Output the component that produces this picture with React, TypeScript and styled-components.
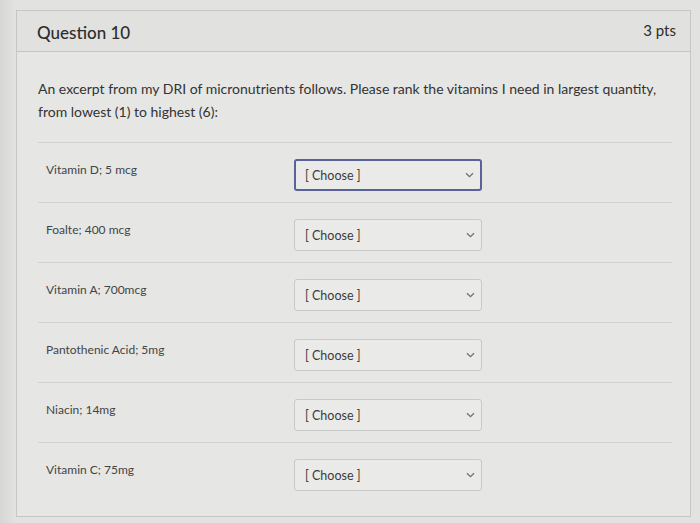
import React from "react";
import styled, { createGlobalStyle } from "styled-components";

const Global = createGlobalStyle`
  html, body { margin: 0; padding: 0; background: #dcdcda; }
  body { font-family: Lato, "Open Sans", "Liberation Sans", sans-serif; color: #3a3a3a; }
`;

const Page = styled.div`
  width: 700px;
  height: 523px;
  box-sizing: border-box;
  padding: 10px 9px 6px 16px;
  background: linear-gradient(90deg, #d6d6d4 0px, #e2e2e0 16px);
`;

const Card = styled.div`
  height: 100%;
  box-sizing: border-box;
  border: 1px solid #c6c6c4;
  background: #e6e6e4;
  display: flex;
  flex-direction: column;
`;

const Header = styled.div`
  height: 40px;
  flex: none;
  display: flex;
  align-items: center;
  justify-content: space-between;
  padding: 0 14px 0 20px;
  background: #e1e1df;
  border-bottom: 1px solid #c4c4c2;
`;

const Title = styled.div`
  font-size: 17px;
  font-weight: 500;
  color: #2d2d2d;
  margin-top: 3px;
`;

const Points = styled.div`
  font-size: 15px;
  color: #2d2d2d;
  margin-top: -2px;
`;

const Body = styled.div`
  padding: 25px 18px 0 21px;
`;

const Prompt = styled.p`
  margin: 0;
  font-size: 14px;
  line-height: 23px;
  color: #333;
`;

const List = styled.div`
  margin-top: 19px;
  border-top: 1px solid #d2d2d0;
`;

const Row = styled.div<{ $last?: boolean }>`
  height: ${(p) => (p.$last ? 70 : 60)}px;
  box-sizing: border-box;
  display: grid;
  grid-template-columns: 256px 188px;
  border-bottom: ${(p) => (p.$last ? "none" : "1px solid #d2d2d0")};
`;

const Label = styled.div`
  padding: 19px 0 0 8px;
  font-size: 12px;
  line-height: 16px;
  color: #444;
`;

const Select = styled.div<{ $focused?: boolean }>`
  margin-top: 16px;
  height: 32px;
  box-sizing: border-box;
  display: flex;
  align-items: center;
  justify-content: space-between;
  padding: 0 6px 0 ${(p) => (p.$focused ? 9 : 10)}px;
  background: #eaeae8;
  border: ${(p) => (p.$focused ? "2px solid #5a6299" : "1px solid #c9c9c7")};
  border-radius: 3px;
  font-size: 12.5px;
  color: #3c3c3c;
`;

const Chevron = () => (
  <svg width="9" height="6" viewBox="0 0 9 6">
    <path d="M1 1.3 L4.5 4.7 L8 1.3" fill="none" stroke="#6e6e80" strokeWidth="1.3" />
  </svg>
);

const rows = [
  "Vitamin D; 5 mcg",
  "Foalte; 400 mcg",
  "Vitamin A; 700mcg",
  "Pantothenic Acid; 5mg",
  "Niacin; 14mg",
  "Vitamin C; 75mg",
];

export default function App() {
  return (
    <>
      <Global />
      <Page>
        <Card>
          <Header>
            <Title>Question 10</Title>
            <Points>3 pts</Points>
          </Header>
          <Body>
            <Prompt>
              An excerpt from my DRI of micronutrients follows. Please rank the vitamins I need in largest quantity,
              <br />
              from lowest (1) to highest (6):
            </Prompt>
            <List>
              {rows.map((r, i) => (
                <Row key={r} $last={i === rows.length - 1}>
                  <Label>{r}</Label>
                  <Select $focused={i === 0}>
                    <span>[ Choose ]</span>
                    <Chevron />
                  </Select>
                </Row>
              ))}
            </List>
          </Body>
        </Card>
      </Page>
    </>
  );
}
